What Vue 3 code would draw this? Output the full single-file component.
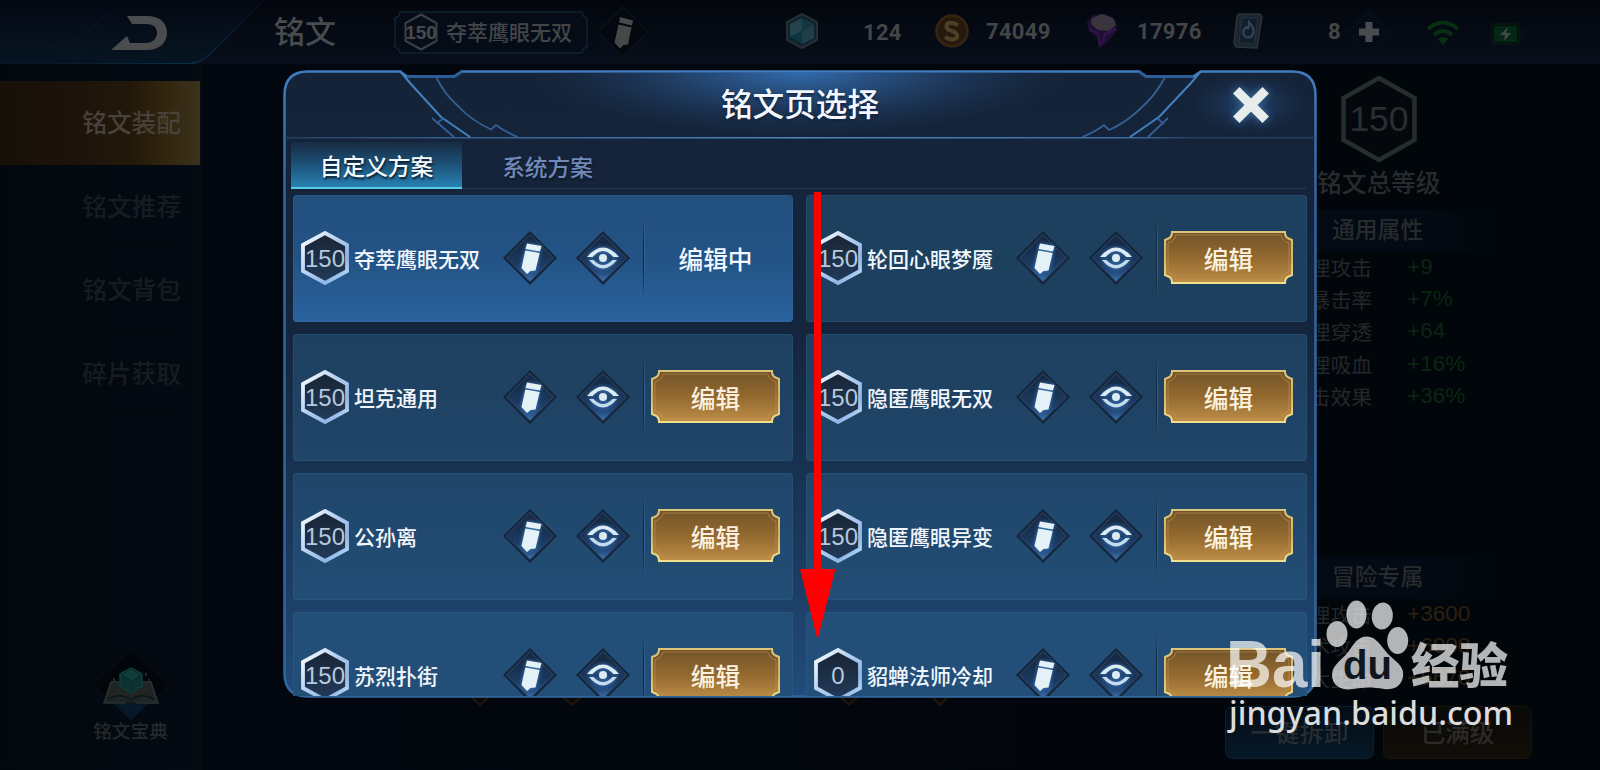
<script setup>
import { ref } from "vue";

const menu = ["铭文装配", "铭文推荐", "铭文背包", "碎片获取"];
const menuActif = ref(0);

const onglets = ["自定义方案", "系统方案"];
const ongletActif = ref(0);

const pages = ref([
  { id: 1, niveau: 150, nom: "夺萃鹰眼无双" },
  { id: 2, niveau: 150, nom: "轮回心眼梦魇" },
  { id: 3, niveau: 150, nom: "坦克通用" },
  { id: 4, niveau: 150, nom: "隐匿鹰眼无双" },
  { id: 5, niveau: 150, nom: "公孙离" },
  { id: 6, niveau: 150, nom: "隐匿鹰眼异变" },
  { id: 7, niveau: 150, nom: "苏烈扑街" },
  { id: 8, niveau: 0, nom: "貂蝉法师冷却" },
]);
const pageActive = ref(1);

const attributs = [
  { nom: "物理攻击", valeur: "+9" },
  { nom: "暴击率", valeur: "+7%" },
  { nom: "物理穿透", valeur: "+64" },
  { nom: "物理吸血", valeur: "+16%" },
  { nom: "暴击效果", valeur: "+36%" },
];
const aventure = [
  { nom: "物理攻击", valeur: "+3600" },
  { nom: "法术攻击", valeur: "+6000" },
  { nom: "最大生命", valeur: "+5670" },
];
</script>

<template>
  <div class="screen">
    <header class="topbar">
      <svg class="topbar-back" width="266" height="65" viewBox="0 0 266 65">
        <defs>
          <linearGradient id="backFill" x1="0" y1="0" x2="0" y2="1">
            <stop offset="0" stop-color="#040813" />
            <stop offset="1" stop-color="#061522" />
          </linearGradient>
          <linearGradient id="backEdge" x1="0" y1="0" x2="1" y2="0">
            <stop offset="0" stop-color="#0a2036" stop-opacity="0.2" />
            <stop offset="0.68" stop-color="#0b3550" />
            <stop offset="1" stop-color="#0a2036" stop-opacity="0.2" />
          </linearGradient>
        </defs>
        <path d="M0 0H264L213 51Q202 64 187 64H0Z" fill="url(#backFill)" />
        <path d="M264 0L213 51Q202 64 187 64H0" fill="none" stroke="url(#backEdge)" stroke-width="1.5" />
        <path d="M108 12Q90 34 72 40L50 48M88 40Q78 52 74 62M54 52H84" fill="none" stroke="#0a1626" />
        <path
          d="M127 16H147C160 16 167 23 167 33C167 43 159 50 147 50H111L127 36L130 43H146C152 43 157 39 157 33C157 27 153 24 146 24H132Z"
          fill="#4b4c4d"
        />
      </svg>
      <h1 class="topbar-title">铭文</h1>
      <div class="page-box">
        <svg class="frame" viewBox="0 0 194 43">
          <path d="M6 1H188L189 5L193 7V36L189 38L188 42H6L5 38L1 36V7L5 5Z" fill="#050c18" stroke="#10222f" stroke-width="1.5" />
        </svg>
        <svg class="page-box-hex" width="34" height="38" viewBox="0 0 34 38">
          <path d="M17 1.500L32.500 10V28L17 36.500L1.500 28V10Z" fill="#070e18" stroke="#3b4145" stroke-width="2" />
          <text x="17" y="26" text-anchor="middle" class="page-box-level">150</text>
        </svg>
        <span>夺萃鹰眼无双</span>
      </div>
      <svg class="topbar-pencil" width="54" height="54" viewBox="0 0 54 54">
        <path d="M27 2L52 27L27 52L2 27Z" fill="#04080f" stroke="#090f16" stroke-width="2" />
        <path
          d="M24 12L37 15.500L36 20.500L23 17.500ZM22.500 19.500L35.500 22.500L32 39.500L27.500 40L24 43.500L18.500 37.500Z"
          fill="#474849"
        />
      </svg>

      <div class="resources">
        <svg width="34" height="36" viewBox="0 0 34 36">
          <path d="M17 1L32 9V27L17 35L2 27V9Z" fill="#102832" stroke="#2c363b" stroke-width="2" />
          <path d="M17 5L29 11L17 18Z" fill="#163f4b" />
          <path d="M17 5V18L5 24V11Z" fill="#2b4d55" />
          <path d="M17 18L29 11V25L17 31Z" fill="#254850" />
          <path d="M17 18V31L5 24Z" fill="#103c4b" />
        </svg>
        <b class="w-124">124</b>
        <svg width="34" height="36" viewBox="0 0 34 36">
          <circle cx="17" cy="18" r="15.500" fill="#2d1c0c" stroke="#3f2a11" stroke-width="2.500" />
          <path d="M23 12Q12 7 11.500 13Q11.500 17 17 18Q23.500 20 22 24.500Q18 29 10 24" fill="none" stroke="#5c4a2a" stroke-width="4" />
        </svg>
        <b class="w-coin">74049</b>
        <svg width="34" height="36" viewBox="0 0 34 36">
          <path d="M2 9L8 2L21 1L31 7L32 18L25 26L15 35L13 26L4 17Z" fill="#24103a" />
          <path d="M7 5L17 1L28 5L31 12L24 18L13 17L6 11Z" fill="#443c47" />
          <path d="M4 17L13 20L15 34M31 16L20 21L17 31" fill="none" stroke="#3c1658" stroke-width="2" />
        </svg>
        <b class="w-gem">17976</b>
        <svg width="32" height="36" viewBox="0 0 32 36">
          <path d="M7 1H28L30 4L25 35L4 34L2 30L5 3Z" fill="#222b35" stroke="#333a40" stroke-width="1.500" />
          <path d="M10 5H26L22 31L7 30Z" fill="#132331" stroke="#2d3945" />
          <path d="M17 9Q25 17 19 24Q12 26 11 19Q12 15 15 14Q17 19 17 9Z" fill="none" stroke="#40505d" stroke-width="2" />
        </svg>
        <b class="w-card">8</b>
        <svg class="plus" width="44" height="48" viewBox="0 0 44 48">
          <path d="M22 2L43 24L22 46L1 24Z" fill="#050c18" stroke="#07101c" stroke-width="1.500" />
          <path d="M18.500 14H25.500V20.500H32V27.500H25.500V34H18.500V27.500H12V20.500H18.500Z" fill="#54585a" />
        </svg>
        <svg class="wifi" width="34" height="26" viewBox="0 0 34 26">
          <path d="M2 9Q17 -4 32 9M8 15Q17 7 26 15" fill="none" stroke="#0a3613" stroke-width="4" />
          <path d="M12 19Q17 15 22 19L17 25Z" fill="#0a3613" />
        </svg>
        <svg class="battery" width="32" height="22" viewBox="0 0 32 22">
          <rect x="1" y="1" width="27" height="20" rx="2" fill="#03100a" stroke="#0d1914" stroke-width="1.500" />
          <rect x="3" y="3" width="23" height="16" fill="#062c16" />
          <path d="M29 6H31V16H29" fill="none" stroke="#0d1914" />
          <path d="M17 4L9 12H14L13 18L20 10H15Z" fill="#4b5550" />
        </svg>
      </div>
    </header>

    <div class="content">
      <nav class="sidebar">
        <button
          v-for="(m, i) in menu"
          :key="m"
          type="button"
          class="sidebar-item"
          :class="{ active: menuActif === i }"
          @click="menuActif = i"
        >
          {{ m }}
        </button>
        <div class="codex">
          <svg width="82" height="74" viewBox="0 0 82 74">
            <path d="M41 2L80 37L41 72L2 37Z" fill="#02050a" stroke="#080c10" stroke-width="1.500" />
            <path d="M24 56H58L41 72Z" fill="#06192a" />
            <path d="M21 34H61L68 55H14Z" fill="#202524" stroke="#293334" stroke-width="1.500" />
            <path d="M41 52Q31 44 18 51M41 52Q51 44 64 51M36 55H46" fill="none" stroke="#0b171c" stroke-width="1.500" />
            <path d="M41 20L52 26V38L41 45L30 38V26Z" fill="#0b3131" stroke="#103c3a" stroke-width="1.500" />
            <path d="M41 21L51 27L42 33L31 27ZM42 33V43" fill="#113c39" stroke="#0b2d31" />
            <path d="M24 30V33M56 25V28M59 31V33" stroke="#10303d" stroke-width="2" />
          </svg>
          <span>铭文宝典</span>
        </div>
      </nav>

      <aside class="stats">
        <svg class="stats-hex" width="76" height="88" viewBox="0 0 76 88">
          <path d="M38 3L73.500 23V65L38 85L2.500 65V23Z" fill="#04080c" stroke="#262d2f" stroke-width="4.500" />
          <text x="38" y="56" text-anchor="middle" class="stats-level">150</text>
        </svg>
        <div class="stats-title">铭文总等级</div>
        <div class="stats-band">通用属性</div>
        <dl class="stats-list">
          <template v-for="a in attributs" :key="a.nom">
            <dt>{{ a.nom }}</dt>
            <dd>{{ a.valeur }}</dd>
          </template>
        </dl>
        <div class="stats-band stats-band-adventure">冒险专属</div>
        <dl class="stats-list gold">
          <template v-for="a in aventure" :key="a.nom">
            <dt>{{ a.nom }}</dt>
            <dd>{{ a.valeur }}</dd>
          </template>
        </dl>
        <div class="stats-actions">
          <button type="button" class="dim-button blue">一键拆卸</button>
          <button type="button" class="dim-button brown">已满级</button>
        </div>
      </aside>
    </div>

    <!-- rune slots peeking out under the dialog -->
    <svg class="rune-slots" width="490" height="24" viewBox="0 0 490 24">
      <path d="M0 0L15 14L30 0M92 0L107 14L122 0M369 0L384 14L399 0M461 0L475 14L489 0" />
    </svg>

    <section class="modal">
      <svg class="modal-frame" width="1034" height="628" viewBox="0 0 1034 628">
        <defs>
          <linearGradient id="modalFill" x1="0" y1="0" x2="0" y2="1">
            <stop offset="0" stop-color="#152338" />
            <stop offset="0.4" stop-color="#14253c" />
            <stop offset="0.75" stop-color="#1a385b" />
            <stop offset="1" stop-color="#214c7b" />
          </linearGradient>
          <radialGradient id="titleGlow" cx="0.5" cy="0" r="1" gradientTransform="translate(0.5 0) scale(0.5 1) translate(-0.5 0)">
            <stop offset="0" stop-color="#336cad" />
            <stop offset="0.4" stop-color="#2a588f" stop-opacity="0.65" />
            <stop offset="1" stop-color="#1d3a60" stop-opacity="0" />
          </radialGradient>
          <radialGradient id="closeGlow">
            <stop offset="0" stop-color="#2a5c98" stop-opacity="0.6" />
            <stop offset="1" stop-color="#1d3a60" stop-opacity="0" />
          </radialGradient>
          <linearGradient id="rule" x1="0" y1="0" x2="1" y2="0">
            <stop offset="0" stop-color="#24405f" />
            <stop offset="0.15" stop-color="#335d8c" />
            <stop offset="0.5" stop-color="#4b87b8" />
            <stop offset="0.82" stop-color="#3d6c9e" />
            <stop offset="0.88" stop-color="#24405f" />
            <stop offset="1" stop-color="#24405f" />
          </linearGradient>
          <linearGradient id="edge" x1="0" y1="0" x2="0" y2="1">
            <stop offset="0" stop-color="#3f7cc0" />
            <stop offset="0.2" stop-color="#33659f" />
            <stop offset="1" stop-color="#33669c" />
          </linearGradient>
        </defs>
        <path
          class="modal-shape"
          d="M1.500 25Q1.500 1.500 25 1.500H117L124 6.500H171L179 1.500H856L863 6.500H910L918 1.500H1009Q1032.500 1.500 1032.500 25V603Q1032.500 626.500 1009 626.500H25Q1.500 626.500 1.500 603Z"
        />
        <rect x="250" y="2" width="534" height="65" fill="url(#titleGlow)" />
        <ellipse cx="966" cy="34" rx="60" ry="32" fill="url(#closeGlow)" />
        <rect x="2" y="67" width="1030" height="1.500" fill="url(#rule)" />
        <g class="modal-lines">
          <path class="bright" d="M117 1L127 13L158 47L187 67" />
          <path d="M153 7Q162 25 176 37Q188 50 208 59.500L213 55Q222 62 235 67" />
          <path d="M149 48L171 67M153.500 53.500L161 48" />
          <path class="bright" d="M918 1L908 13L876 47L847 67" />
          <path d="M882 7Q873 25 858 38Q844 52 826 60L821 55Q812 62 799 67" />
          <path d="M885 48L865 67M875 49L881 54" />
        </g>
        <path class="modal-notch" d="M124 6.500H171L179 1.500M856 1.500L863 6.500H910" />
      </svg>

      <header class="modal-header">
        <h2 class="modal-title">铭文页选择</h2>
        <button type="button" class="modal-close" aria-label="关闭">
          <svg width="40" height="40" viewBox="0 0 40 40">
            <path d="M8.500 2L20 13.500L31.500 2L38 8.500L26.500 20L38 31.500L31.500 38L20 26.500L8.500 38L2 31.500L13.500 20L2 8.500Z" />
          </svg>
        </button>
      </header>

      <div class="tabs">
        <button
          v-for="(o, i) in onglets"
          :key="o"
          type="button"
          class="tab"
          :class="{ active: ongletActif === i }"
          @click="ongletActif = i"
        >
          {{ o }}
        </button>
      </div>

      <div class="pages">
        <div v-for="p in pages" :key="p.id" class="page" :class="{ current: pageActive === p.id }">
          <svg class="page-hex" width="48" height="54" viewBox="0 0 48 54">
            <defs>
              <linearGradient :id="`hex${p.id}`" x1="0" y1="0" x2="1" y2="1">
                <stop offset="0" stop-color="#ffffff" />
                <stop offset="0.45" stop-color="#b4cff0" />
                <stop offset="0.75" stop-color="#8fb6e6" />
                <stop offset="1" stop-color="#c6e4ff" />
              </linearGradient>
              <linearGradient :id="`core${p.id}`" x1="0" y1="0" x2="0" y2="1">
                <stop offset="0" stop-color="#192434" />
                <stop offset="1" stop-color="#213b5b" />
              </linearGradient>
            </defs>
            <path d="M24 2L46 14V40L24 52L2 40V14Z" :fill="`url(#core${p.id})`" :stroke="`url(#hex${p.id})`" stroke-width="3.800" />
            <text x="24" y="36" text-anchor="middle" class="page-level">{{ p.niveau }}</text>
          </svg>
          <span class="page-nom">{{ p.nom }}</span>
          <button type="button" class="diamond" aria-label="重命名">
            <svg width="54" height="54" viewBox="0 0 54 54">
              <defs>
                <linearGradient id="diamondFill" x1="0" y1="0" x2="0" y2="1">
                  <stop offset="0.2" stop-color="#162b46" />
                  <stop offset="0.65" stop-color="#1b3b63" />
                  <stop offset="0.85" stop-color="#275287" />
                  <stop offset="1" stop-color="#3e76b6" />
                </linearGradient>
              </defs>
              <path d="M27 0L54 27L27 54L0 27Z" fill="#13253c" />
              <path d="M27 3.500L50.500 27L27 50.500L3.500 27Z" fill="url(#diamondFill)" stroke="#354a68" />
              <path
                class="glow"
                d="M24 12.500L38.500 15L37 20.500L22.500 18ZM22.300 19.500L36.700 22L32.500 39.500L27.500 40L24 43L18.500 37Z"
                fill="#e4f1f6"
              />
            </svg>
          </button>
          <button type="button" class="diamond eye" aria-label="预览">
            <svg width="54" height="54" viewBox="0 0 54 54">
              <path d="M27 0L54 27L27 54L0 27Z" fill="#13253c" />
              <path d="M27 3.500L50.500 27L27 50.500L3.500 27Z" fill="url(#diamondFill)" stroke="#354a68" />
              <g class="glow">
                <path d="M11 26Q19 16.500 27 16.500Q35 16.500 43 26L37.500 26Q32 20 27 20Q22 20 16.500 26Z" fill="#dcebf4" />
                <path d="M13 29H17.500Q22 34 27 34Q32 34 36.500 29H41Q34 37.500 27 37.500Q20 37.500 13 29Z" fill="#c4dcec" />
                <circle cx="27" cy="27" r="4" fill="#dcebf4" />
              </g>
            </svg>
          </button>
          <i class="page-sep"></i>
          <span v-if="pageActive === p.id" class="page-current">编辑中</span>
          <button v-else type="button" class="page-edit" @click="pageActive = p.id">
            <svg class="frame" viewBox="0 0 129 53" preserveAspectRatio="none">
              <defs>
                <linearGradient id="goldFill" x1="0" y1="0" x2="0" y2="1">
                  <stop offset="0" stop-color="#705329" />
                  <stop offset="0.5" stop-color="#93692f" />
                  <stop offset="1" stop-color="#bd8e48" />
                </linearGradient>
                <linearGradient id="goldEdge" x1="0" y1="0" x2="0" y2="1">
                  <stop offset="0" stop-color="#dcc57b" />
                  <stop offset="0.5" stop-color="#d3b465" />
                  <stop offset="1" stop-color="#efe08d" />
                </linearGradient>
              </defs>
              <path
                d="M8 1H121Q121 6 124.500 7.500L128 9V44L124.500 45.500Q121 47 121 52H8Q8 47 4.500 45.500L1 44V9L4.500 7.500Q8 6 8 1Z"
                fill="url(#goldFill)"
                stroke="url(#goldEdge)"
                stroke-width="2"
              />
              <path
                d="M12 4H117Q118 10 125 12V41Q118 43 117 49H12Q11 43 4 41V12Q11 10 12 4Z"
                fill="none"
                stroke="#d09552"
                stroke-opacity="0.55"
              />
            </svg>
            <span>编辑</span>
          </button>
        </div>
      </div>
    </section>

    <!-- scroll hint -->
    <svg class="scroll-arrow" width="36" height="448" viewBox="0 0 36 448">
      <path d="M14 0H21V377H35.500L17.500 448L0 377H14Z" fill="#ff0000" />
    </svg>

    <svg class="watermark" width="300" height="150" viewBox="0 0 300 150">
      <g fill="#ffffff" fill-opacity="0.7">
        <text x="-2" y="97" class="wm-bai" textLength="99" lengthAdjust="spacingAndGlyphs">Bai</text>
        <ellipse cx="109" cy="44" rx="10.500" ry="13" />
        <ellipse cx="128.500" cy="24.500" rx="10" ry="14" />
        <ellipse cx="154.300" cy="26" rx="10.500" ry="13.500" transform="rotate(6 154 26)" />
        <ellipse cx="169.700" cy="50.500" rx="10.500" ry="13.500" />
        <path
          d="M139 46.500C148 46.500 153 56 160 64C168 72 177 76 175 87C173 97 165 100 156 99C145 97 135 97 125 99C114 101 104 96 104 85C104 75 113 71 120 62C126 54 130 46.500 139 46.500Z"
        />
        <text x="183" y="93" class="wm-cn" textLength="97" lengthAdjust="spacingAndGlyphs">经验</text>
      </g>
      <text x="115" y="89" class="wm-du" textLength="49" lengthAdjust="spacingAndGlyphs">du</text>
      <text x="1" y="135" class="wm-url" textLength="284" lengthAdjust="spacingAndGlyphs">jingyan.baidu.com</text>
    </svg>
  </div>
</template>

<style>
body {
  margin: 0;
  background: #02060d;
}
</style>

<style scoped>
.screen {
  position: relative;
  width: 1600px;
  height: 770px;
  overflow: hidden;
  background: linear-gradient(90deg, #030811 0, #02060d 50%, #01060a 100%);
  font-family: "Noto Sans CJK SC", sans-serif;
  font-weight: 500;
}

button {
  margin: 0;
  padding: 0;
  border: 0;
  background: none;
  font: inherit;
  color: inherit;
  cursor: pointer;
}

svg {
  display: block;
  flex: none;
}

.frame {
  position: absolute;
  inset: 0;
  width: 100%;
  height: 100%;
}

.topbar {
  display: flex;
  align-items: center;
  height: 64px;
  background: linear-gradient(#03060d, #070e1a);
  color: #434648;
  white-space: nowrap;
}

.topbar-title {
  margin: 0 0 0 8px;
  width: 64px;
  font-size: 31px;
  font-weight: 500;
  line-height: 60px;
  padding-bottom: 4px;
  color: #484b4e;
}

.page-box {
  position: relative;
  display: flex;
  align-items: center;
  width: 194px;
  height: 43px;
  margin-left: 56px;
  font-size: 21px;
}

.page-box span,
.page-box-hex {
  position: relative;
}

.page-box span {
  padding-bottom: 3px;
}

.page-box-hex {
  margin: 0 8px 0 10px;
}

.page-box-level {
  font: bold 19px "Liberation Sans", sans-serif;
  fill: #484b4e;
}

.topbar-pencil {
  margin-left: 8px;
}

.resources {
  display: flex;
  align-items: center;
  margin-left: 135px;
  margin-top: -3px;
}

.resources svg {
  opacity: 0.85;
}

.resources b {
  font: bold 22px Roboto, "Liberation Sans", sans-serif;
  letter-spacing: 0.3px;
  color: #434547;
}

.w-124 {
  width: 37px;
  margin: 3px 35px 0 44px;
}

.w-coin {
  width: 66px;
  margin: 1px 33px 0 17px;
}

.w-gem {
  width: 64px;
  margin: 1px 31px 0 18px;
}

.w-card {
  width: 14px;
  margin: 1px 5px 0 64px;
}

.plus {
  margin-top: 3px;
}

.wifi {
  margin-left: 35px;
  margin-top: 4px;
}

.battery {
  margin-left: 31px;
  margin-top: 6px;
}

.content {
  display: flex;
  justify-content: space-between;
  height: 706px;
}

.sidebar {
  display: flex;
  flex-direction: column;
  box-sizing: border-box;
  width: 201px;
  padding-top: 17px;
  background: linear-gradient(90deg, #03080f, #040a12);
  border-right: 1px solid #050c12;
}

.sidebar-item {
  box-sizing: border-box;
  height: 83.5px;
  padding: 0 19px 3px 0;
  text-align: right;
  font-size: 24.7px;
  color: #171c22;
  background: linear-gradient(90deg, transparent 36%, #080d12 60%, transparent 96%) bottom / 100% 1px no-repeat;
}

.sidebar-item.active {
  color: #48423a;
  background: linear-gradient(90deg, #171109 0, #1d120b 32%, #221809 65%, #332710 85%, #3b321c 100%);
}

.codex {
  display: flex;
  flex-direction: column;
  align-items: center;
  gap: 0;
  margin: auto 0 30px 61px;
  font-size: 18.7px;
  line-height: 20px;
  color: #24292c;
}

.codex svg {
  margin-bottom: -2px;
}

.stats {
  display: flex;
  flex-direction: column;
  width: 306px;
  margin-right: 0;
  color: #282b2e;
}

.stats-hex {
  margin: 11px 0 0 47px;
}

.stats-level {
  font: 35.5px "Liberation Sans", sans-serif;
  fill: #2b2e31;
}

.stats-title {
  margin: 0 0 11px 23px;
  font-size: 24.7px;
  line-height: 36px;
}

.stats-band {
  box-sizing: border-box;
  width: 210px;
  height: 42px;
  padding-left: 38px;
  font-size: 22.8px;
  line-height: 38px;
  background: linear-gradient(90deg, #030a13 60%, transparent);
}

.stats-band-adventure {
  margin-top: 145px;
}

.stats-list {
  display: grid;
  grid-template-columns: 78px 1fr;
  column-gap: 35px;
  margin: -1px 0 0;
  font-size: 20.8px;
  font-weight: 400;
  line-height: 32.2px;
}

.stats-list dt {
  display: flex;
  justify-content: flex-end;
  white-space: nowrap;
  color: #24272a;
}

.stats-list dd {
  margin: 0;
  font: 22.5px/32.2px "Liberation Sans", sans-serif;
  color: #0a2610;
}

.stats-list.gold dd {
  color: #2c200f;
}

.stats-actions {
  display: flex;
  gap: 9px;
  margin: 11px 0 0 -69px;
  position: relative;
}

.dim-button {
  width: 149px;
  height: 53px;
  flex: none;
  padding-bottom: 1px;
  font-size: 24.5px;
  color: #262c31;
  border: 1px solid #0a202c;
  border-radius: 7px;
  background: linear-gradient(#030d16, #061827);
}

.dim-button.brown {
  color: #2b2a28;
  border-color: #18130b;
  background: linear-gradient(#090908, #120e08);
}

.rune-slots {
  position: absolute;
  left: 465px;
  top: 691px;
  fill: #0b0907;
  stroke: #20160a;
  stroke-width: 2;
}

.modal {
  position: absolute;
  left: 283px;
  top: 70px;
  display: flex;
  flex-direction: column;
  width: 1034px;
  height: 628px;
}

.modal-frame {
  position: absolute;
  inset: 0;
}

.modal-shape {
  fill: url(#modalFill);
  stroke: url(#edge);
  stroke-width: 2.5;
}

.modal-notch {
  fill: none;
  stroke: #2d5d97;
  stroke-width: 3;
}

.modal-lines path {
  fill: none;
  stroke: #345f94;
  stroke-width: 1.8;
}

.modal-lines .bright {
  stroke: #4280c0;
  stroke-width: 2;
}

.modal-header {
  position: relative;
  display: grid;
  grid-template-columns: 1fr auto 1fr;
  align-items: center;
  height: 68px;
}

.modal-title {
  grid-column: 2;
  margin: 0;
  padding-bottom: 4px;
  font-size: 31.6px;
  font-weight: 500;
  line-height: 62px;
  color: #f3f8ff;
  text-shadow: 0 2px 3px #10213a;
}

.modal-close {
  justify-self: end;
  margin: 2px 46px 0 0;
}

.modal-close svg {
  fill: #e6edea;
  filter: drop-shadow(0 0 4px #41719f);
}

.tabs {
  position: relative;
  display: flex;
  box-sizing: border-box;
  height: 51px;
  margin: 0 11px 0 8px;
  padding-top: 4px;
  background: linear-gradient(#2a3b52, #2a3b52) bottom / 100% 1px no-repeat;
}

.tab {
  box-sizing: border-box;
  width: 171px;
  padding-top: 2px;
  font-size: 22.7px;
  color: #7189b8;
  text-shadow: 1px 2px 2px #0d1a2b;
}

.tab.active {
  color: #f4fbff;
  border-bottom: 2px solid #55cdea;
  background: linear-gradient(#162b43, #1c4d72 45%, #2781b2);
}

.pages {
  position: relative;
  display: grid;
  grid-template-columns: 500px 501px;
  grid-auto-rows: 127px;
  gap: 12px 13px;
  height: 501px;
  margin: 6px 0 0 10px;
  overflow: hidden;
}

.page {
  display: flex;
  align-items: center;
  box-sizing: border-box;
  padding: 0 0 2px 8px;
  border-radius: 4px;
  background: #1e405f;
  box-shadow: inset 0 0 0 1px rgba(72, 120, 168, 0.2);
}

.page:nth-child(n + 3) {
  background: linear-gradient(#1e4060, #204567);
}

.page:nth-child(n + 5) {
  background: linear-gradient(#20466a, #224d75);
}

.page:nth-child(n + 7) {
  background: #224e77;
}

.page.current {
  background: linear-gradient(#214f7e 0, #235385 50%, #2a639f 100%);
}

.page-level {
  font: 24px "Liberation Sans", sans-serif;
  fill: #b7c8dc;
}

.page-nom {
  width: 149px;
  margin-left: 5px;
  font-size: 21px;
  line-height: 30px;
  color: #f1f7fd;
  white-space: nowrap;
}

.diamond.eye {
  margin-left: 19px;
}

.glow {
  filter: drop-shadow(0 0 2px #3f7ec6);
}

.page-sep {
  width: 2px;
  height: 84px;
  margin: 0 6px 0 13px;
  background: linear-gradient(90deg, #102740 50%, #35618e 50%);
  mask-image: linear-gradient(transparent, #000 35%, #000 65%, transparent);
}

.page-current,
.page-edit {
  width: 129px;
  text-align: center;
  font-size: 24.7px;
  color: #f1f7ff;
}

.page-edit {
  position: relative;
  height: 53px;
  color: #fbf1de;
}

.page-edit span {
  position: relative;
}

.scroll-arrow {
  position: absolute;
  left: 800px;
  top: 192px;
}

.watermark {
  position: absolute;
  left: 1228px;
  top: 590px;
  overflow: visible;
}

.wm-bai {
  font: bold 66px "Liberation Sans", sans-serif;
}

.wm-cn {
  font: 900 48px "Noto Sans CJK SC", sans-serif;
}

.wm-du {
  font: bold 40px "Liberation Sans", sans-serif;
  fill: #10161f;
}

.wm-url {
  font: 500 33px "Noto Sans", sans-serif;
  fill: #dcdddf;
}
</style>
